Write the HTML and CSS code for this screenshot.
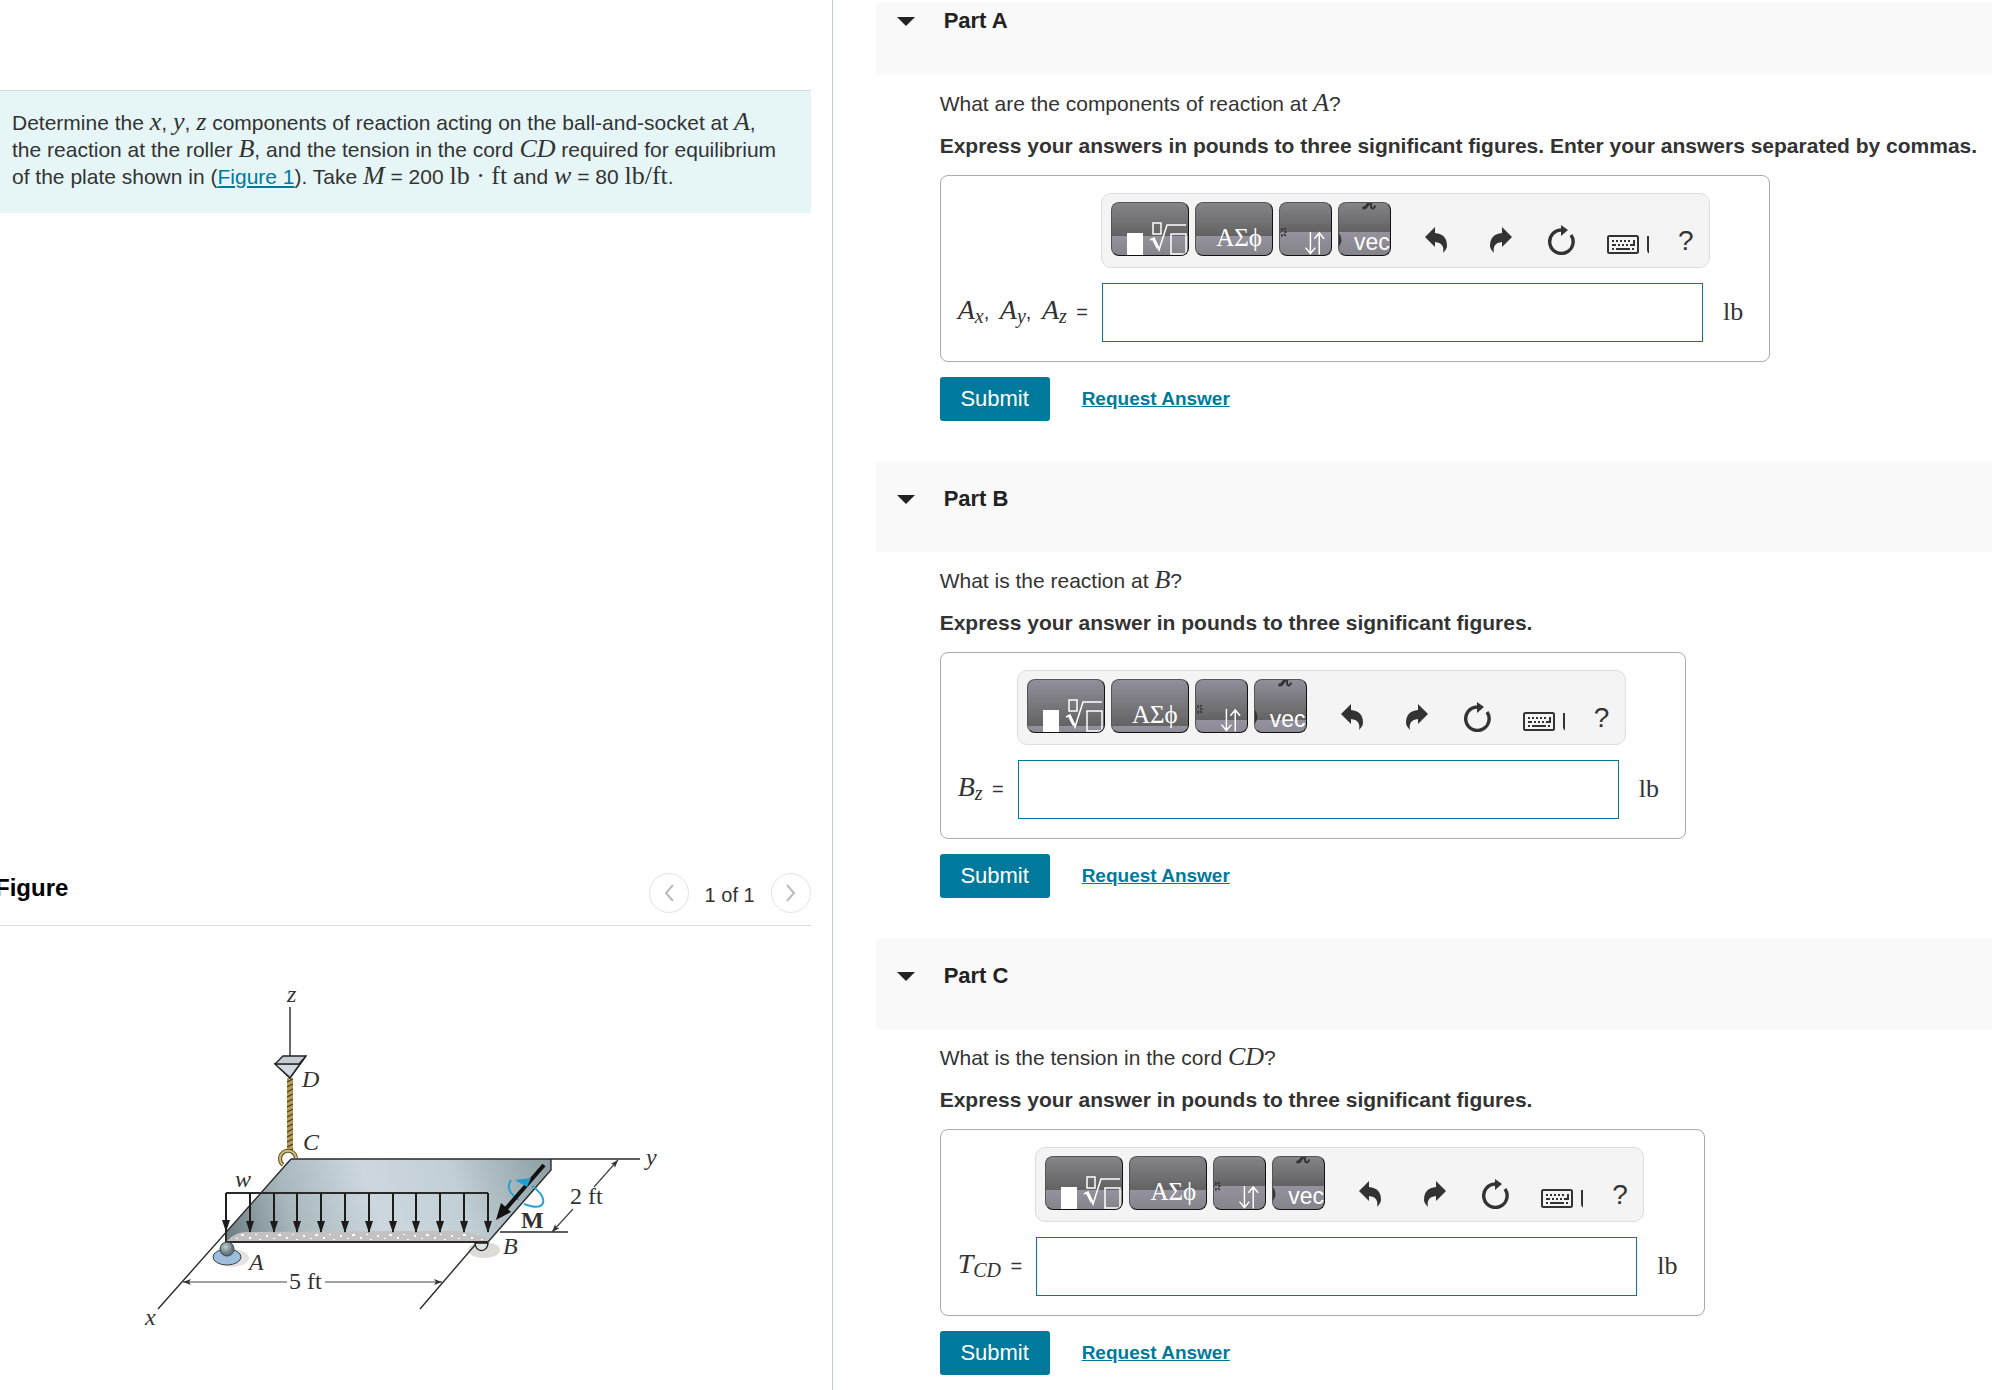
FILE: index.html
```html
<!doctype html>
<html lang="en">
<head>
	<meta charset="UTF-8">
	<title>Equilibrium of a plate</title>
	<link rel="stylesheet" href="styles.css">
</head>
<body>
	<svg class="sprite" aria-hidden="true">
		<symbol id="i-template" viewBox="0 0 76 52">
			<path d="M15 30h16v22H15z" fill="#fff"/>
			<path d="M41 20h8v11h-8zM59 31h15v20H59z" fill="none" stroke="#fff" stroke-width="1.5"/>
			<path d="M38 37l4-2 5 12 8-25h19" fill="none" stroke="#fff" stroke-width="1.5"/>
			<path d="M41 35l5 10" stroke="#fff" stroke-width="3"/>
		</symbol>
		<symbol id="i-arrows" viewBox="0 0 52 52">
			<path d="M31 29v22M26 45l5 6 5-6M40 52V30M35 36l5-6 5 6" fill="none" stroke="#fff" stroke-width="1.5"/>
			<path d="M0 29h1M4 29h3M2 25v3M2 31v3M4 27l2-2M4 31l2 2" stroke="#333" stroke-width="1.5"/>
		</symbol>
		<symbol id="i-vec" viewBox="0 0 52 52">
			<path d="M24 5l3-1 4-5" fill="none" stroke="#333" stroke-width="3"/>
			<path d="M33 -1q-1 6 1 6t3-3" fill="none" stroke="#333" stroke-width="2"/>
			<path d="M0 30q5 7 0 14z" fill="#333"/>
		</symbol>
		<symbol id="i-undo" viewBox="0 0 22 26">
			<path d="M0 10L10 0v6q12 1 12 13 0 3-4 7 2-10-8-11v5z" fill="#333"/>
		</symbol>
		<symbol id="i-redo" viewBox="0 0 22 26">
			<path d="M22 10L12 0v6Q0 7 0 19q0 3 4 7-2-10 8-11v5z" fill="#333"/>
		</symbol>
		<symbol id="i-reset" viewBox="0 0 27 30">
			<path d="M23 10a11.700 11.700 0 1 1-10-5" fill="none" stroke="#333" stroke-width="3.400"/>
			<path d="M13 0l7 5-7 6z" fill="#333"/>
		</symbol>
		<symbol id="i-keyboard" viewBox="0 0 42 20">
			<rect x="1" y="1" width="30" height="17" rx="1.5" fill="none" stroke="#333" stroke-width="2"/>
			<path d="M5 6h18" fill="none" stroke="#333" stroke-width="2" stroke-dasharray="2 2"/>
			<path d="M5 10h4M11 10h2M15 10h2M19 10h2M23 10h4V5M5 14h2M9 14h14M25 14h2" fill="none" stroke="#333" stroke-width="2"/>
			<path d="M41 1v14l1 3" fill="none" stroke="#333" stroke-width="2"/>
		</symbol>
	</svg>

	<div class="page">
		<section class="side">
			<div class="problem">
				Determine the <i>x</i>, <i>y</i>, <i>z</i> components of reaction acting on the ball-and-socket at <i>A</i>, the reaction at the roller <i>B</i>, and the tension in the cord <i>CD</i> required for equilibrium of the plate shown in (<a href="#figure">Figure 1</a>). Take <i>M</i> = 200 <span class="rm">lb · ft</span> and <i>w</i> = 80 <span class="rm">lb/ft</span>.
			</div>
			<div class="figure" id="figure">
				<div class="figure-head">
					<h2>Figure</h2>
					<div class="pager">
						<button type="button" aria-label="Previous figure"><svg viewBox="0 0 10 18"><path d="M9 1L2 9l7 8"/></svg></button>
						<span>1 of 1</span>
						<button type="button" aria-label="Next figure"><svg viewBox="0 0 10 18"><path d="M1 1l7 8-7 8"/></svg></button>
					</div>
				</div>
				<svg class="diagram" viewBox="130 970 560 370" role="img" aria-label="Plate ABC with distributed load w and moment M">
					<defs>
						<linearGradient id="plate" gradientUnits="userSpaceOnUse" x1="230" y1="1240" x2="545" y2="1140">
							<stop offset="0" stop-color="#6f8083"/>
							<stop offset=".2" stop-color="#a9b8bd"/>
							<stop offset=".45" stop-color="#ccd8de"/>
							<stop offset=".7" stop-color="#c2cfd5"/>
							<stop offset="1" stop-color="#8c9ea3"/>
						</linearGradient>
						<radialGradient id="ball" cx=".4" cy=".35">
							<stop offset="0" stop-color="#c5d1d2"/>
							<stop offset="1" stop-color="#66767a"/>
						</radialGradient>
						<pattern id="rope" x="286" y="1078" width="8" height="5" patternUnits="userSpaceOnUse">
							<path d="M0 0h8v5H0z" fill="#b59c58"/>
							<path d="M1 4l6-3" stroke="#4a3d1c" stroke-width="1.3"/>
						</pattern>
						<pattern id="specks" x="226" y="1231" width="37" height="11" patternUnits="userSpaceOnUse">
							<path d="M0 0h37v11H0z" fill="#c3c1c1"/>
							<path d="M3 4h2v2H3zM10 7h2v1h-2zM15 3h3v2h-3zM23 6h2v2h-2zM29 3h2v1h-2zM33 8h2v1h-2z" fill="#fff"/>
						</pattern>
						<marker id="load" viewBox="0 0 8 12" refX="4" refY="11" markerWidth="8" markerHeight="12" markerUnits="userSpaceOnUse">
							<path d="M0 0h8L4 12z" fill="#1c1c1c"/>
						</marker>
						<marker id="dim" viewBox="0 0 8 6" refX="8" refY="3" markerWidth="8" markerHeight="6" markerUnits="userSpaceOnUse" orient="auto-start-reverse">
							<path d="M0 0l8 3-8 3 2-3z" fill="#333"/>
						</marker>
					</defs>
					<ellipse cx="232" cy="1258" rx="17" ry="9" fill="#e6e2e1"/>
					<ellipse cx="484" cy="1250" rx="16" ry="8" fill="#dedbd9"/>
					<path d="M291 1159h260v11l-63 72H226v-10z" fill="url(#plate)"/>
					<path d="M227 1241q8-9 20-9l160-1 55 0 22 5 3 5z" fill="url(#specks)"/>
					<g fill="none" stroke="#2a2a2a" stroke-width="1.4">
						<path d="M290 1007v50M291 1159h349M291 1159L158 1309M551 1159v11l-63 72M475 1245l-55 64M500 1232h68"/>
						<path d="M226 1230v12h262" stroke-width="2"/>
						<path d="M226 1193h262" stroke-width="2"/>
					</g>
					<g stroke="#1c1c1c" stroke-width="2">
						<path d="M226 1193v38" marker-end="url(#load)"/><path d="M250 1193v39" marker-end="url(#load)"/>
						<path d="M274 1193v39" marker-end="url(#load)"/><path d="M297 1193v39" marker-end="url(#load)"/>
						<path d="M321 1193v39" marker-end="url(#load)"/><path d="M345 1193v39" marker-end="url(#load)"/>
						<path d="M369 1193v39" marker-end="url(#load)"/><path d="M393 1193v39" marker-end="url(#load)"/>
						<path d="M416 1193v39" marker-end="url(#load)"/><path d="M440 1193v39" marker-end="url(#load)"/>
						<path d="M464 1193v39" marker-end="url(#load)"/><path d="M488 1193v39" marker-end="url(#load)"/>
					</g>
					<g fill="none" stroke="#444" stroke-width="1.2">
						<path d="M287 1282H183" marker-end="url(#dim)"/>
						<path d="M325 1282h117" marker-end="url(#dim)"/>
						<path d="M594 1187l24-27" marker-end="url(#dim)"/>
						<path d="M573 1209l-21 23" marker-end="url(#dim)"/>
					</g>
					<!-- cord CD and its anchors -->
					<path d="M287 1078h6v74h-6z" fill="url(#rope)"/>
					<path d="M283 1165a8 8 0 1 1 13-7" fill="none" stroke="#5e4f20" stroke-width="4"/>
					<path d="M283 1165a8 8 0 1 1 13-7" fill="none" stroke="#d2bd78" stroke-width="2"/>
					<path d="M283 1056h23l-16 22-15-14z" fill="#c4cbd3" stroke="#222" stroke-width="1.3"/>
					<path d="M275 1064h24l7-8-16 22z" fill="#8f979f" stroke="#222" stroke-width="1.3"/>
					<path d="M277 1065h21l-8 11z" fill="#d3dae2"/>
					<!-- supports -->
					<ellipse cx="227" cy="1257" rx="14" ry="8" fill="#9cbddb" stroke="#37474f"/>
					<circle cx="227" cy="1249" r="7" fill="url(#ball)" stroke="#37474f"/>
					<path d="M475 1243a6 7 0 0 0 13 0z" fill="#dfe6e8" stroke="#222" stroke-width="1.4"/>
					<!-- moment M -->
					<path d="M511 1180q-7 10 8 20M524 1204q16 6 19-1 2-8-11-17" fill="none" stroke="#27a3d4" stroke-width="2"/>
					<path d="M544 1165l-40 46" stroke="#111" stroke-width="4"/>
					<path d="M496 1220l5-17 10 9z" fill="#111"/>
					<path d="M515 1180l16-2-4 9z" fill="#1f9bcd"/>
					<g class="tags">
						<text x="287" y="1002">z</text>
						<text x="302" y="1087">D</text>
						<text x="303" y="1150">C</text>
						<text x="235" y="1187">w</text>
						<text x="249" y="1270">A</text>
						<text x="503" y="1254">B</text>
						<text x="145" y="1325">x</text>
						<text x="646" y="1165">y</text>
						<text x="521" y="1228" class="bold">M</text>
						<text x="289" y="1289" class="up">5 ft</text>
						<text x="570" y="1204" class="up">2 ft</text>
					</g>
				</svg>
			</div>
		</section>

		<main class="parts">
			<section class="part part-a">
				<header><h3><button type="button" class="toggle">Part A</button></h3></header>
				<form class="part-body">
					<p>What are the components of reaction at <i>A</i>?</p>
					<p><b>Express your answers in pounds to three significant figures. Enter your answers separated by commas.</b></p>
					<div class="answer">
						<div class="toolbar">
							<button type="button" class="key wide" aria-label="Templates"><svg><use href="#i-template"/></svg></button>
							<button type="button" class="key wide greek">ΑΣϕ</button>
							<button type="button" class="key" aria-label="Subscripts"><svg><use href="#i-arrows"/></svg></button>
							<button type="button" class="key vec"><svg><use href="#i-vec"/></svg>vec</button>
							<button type="button" class="tool undo" aria-label="Undo"><svg><use href="#i-undo"/></svg></button>
							<button type="button" class="tool redo" aria-label="Redo"><svg><use href="#i-redo"/></svg></button>
							<button type="button" class="tool reset" aria-label="Reset"><svg><use href="#i-reset"/></svg></button>
							<button type="button" class="tool keyboard" aria-label="Keyboard shortcuts"><svg><use href="#i-keyboard"/></svg></button>
							<button type="button" class="tool help">?</button>
						</div>
						<label for="ans-a"><i>A<sub>x</sub></i>, <i>A<sub>y</sub></i>, <i>A<sub>z</sub></i> =</label>
						<input type="text" id="ans-a">
						<span class="unit">lb</span>
					</div>
					<div class="actions"><button type="submit">Submit</button><a href="#">Request Answer</a></div>
				</form>
			</section>

			<section class="part part-b">
				<header><h3><button type="button" class="toggle">Part B</button></h3></header>
				<form class="part-body">
					<p>What is the reaction at <i>B</i>?</p>
					<p><b>Express your answer in pounds to three significant figures.</b></p>
					<div class="answer">
						<div class="toolbar">
							<button type="button" class="key wide" aria-label="Templates"><svg><use href="#i-template"/></svg></button>
							<button type="button" class="key wide greek">ΑΣϕ</button>
							<button type="button" class="key" aria-label="Subscripts"><svg><use href="#i-arrows"/></svg></button>
							<button type="button" class="key vec"><svg><use href="#i-vec"/></svg>vec</button>
							<button type="button" class="tool undo" aria-label="Undo"><svg><use href="#i-undo"/></svg></button>
							<button type="button" class="tool redo" aria-label="Redo"><svg><use href="#i-redo"/></svg></button>
							<button type="button" class="tool reset" aria-label="Reset"><svg><use href="#i-reset"/></svg></button>
							<button type="button" class="tool keyboard" aria-label="Keyboard shortcuts"><svg><use href="#i-keyboard"/></svg></button>
							<button type="button" class="tool help">?</button>
						</div>
						<label for="ans-b"><i>B<sub>z</sub></i> =</label>
						<input type="text" id="ans-b">
						<span class="unit">lb</span>
					</div>
					<div class="actions"><button type="submit">Submit</button><a href="#">Request Answer</a></div>
				</form>
			</section>

			<section class="part part-c">
				<header><h3><button type="button" class="toggle">Part C</button></h3></header>
				<form class="part-body">
					<p>What is the tension in the cord <i>CD</i>?</p>
					<p><b>Express your answer in pounds to three significant figures.</b></p>
					<div class="answer">
						<div class="toolbar">
							<button type="button" class="key wide" aria-label="Templates"><svg><use href="#i-template"/></svg></button>
							<button type="button" class="key wide greek">ΑΣϕ</button>
							<button type="button" class="key" aria-label="Subscripts"><svg><use href="#i-arrows"/></svg></button>
							<button type="button" class="key vec"><svg><use href="#i-vec"/></svg>vec</button>
							<button type="button" class="tool undo" aria-label="Undo"><svg><use href="#i-undo"/></svg></button>
							<button type="button" class="tool redo" aria-label="Redo"><svg><use href="#i-redo"/></svg></button>
							<button type="button" class="tool reset" aria-label="Reset"><svg><use href="#i-reset"/></svg></button>
							<button type="button" class="tool keyboard" aria-label="Keyboard shortcuts"><svg><use href="#i-keyboard"/></svg></button>
							<button type="button" class="tool help">?</button>
						</div>
						<label for="ans-c"><i>T<sub>CD</sub></i> =</label>
						<input type="text" id="ans-c">
						<span class="unit">lb</span>
					</div>
					<div class="actions"><button type="submit">Submit</button><a href="#">Request Answer</a></div>
				</form>
			</section>
		</main>
	</div>
</body>
</html>
```
FILE: styles.css
```css
*{
	box-sizing: border-box;
	margin: 0;
	padding: 0;
}
body{
	font: 21px/26px "Liberation Sans", Arial, sans-serif;
	color: #333;
	background: #fff;
}
button{
	font: inherit;
	color: inherit;
	border: 0;
	background: none;
	cursor: pointer;
}
a{
	color: #007a9c;
}
i, .rm, .unit{
	font-family: "Liberation Serif", "Times New Roman", serif;
	font-size: 26px;
	line-height: 20px;
}
sub{
	font-size: 20px;
	line-height: 0;
	vertical-align: -4px;
}
.sprite{
	display: none;
}
.page{
	display: flex;
	min-height: 100vh;
}

/* left column */
.side{
	display: flex;
	flex-direction: column;
	justify-content: space-between;
	width: 41.8%;
	padding: 90px 21px 0 0;
	border-right: 1px solid #bccad6;
	overflow: hidden;
}
.problem{
	padding: 18px 24px 23px 12px;
	line-height: 27px;
	border-top: 1px solid #d9dcdd;
	background: #e6f6f7;
}
.figure{
	margin-bottom: 26px;
}
.figure-head{
	display: flex;
	justify-content: space-between;
	height: 64px;
	border-bottom: 1px solid #ddd;
}
.figure-head h2{
	margin-left: -5px;
	padding-top: 13px;
	font-size: 24px;
	color: #000;
}
.pager{
	display: flex;
	gap: 16px;
	height: 40px;
	margin-top: 11px;
	font-size: 20px;
	line-height: 44px;
}
.pager button{
	width: 40px;
	height: 40px;
	border: 1px solid #e3e3e3;
	border-radius: 50%;
}
.pager svg{
	display: block;
	width: 10px;
	height: 18px;
	margin: auto;
	fill: none;
	stroke: #bbb;
	stroke-width: 2;
}
.diagram{
	display: block;
	width: 560px;
	max-width: 100%;
	margin: 44px 0 50px 130px;
}
.tags{
	font: italic 24px "Liberation Serif", "Times New Roman", serif;
	fill: #333;
}
.tags .up{
	font-style: normal;
}
.tags .bold{
	font-style: normal;
	font-weight: bold;
}

/* right column */
.parts{
	flex: 1;
	min-width: 0;
	padding: 3px 0 0 43px;
}
.part header{
	height: 90px;
	padding-top: 24px;
	background: #f9f9f9;
}
.part-a header{
	height: 72px;
	padding-top: 5px;
}
.part h3{
	font-size: 22px;
}
.toggle{
	display: flex;
	align-items: center;
	gap: 29px;
	padding-left: 21px;
	color: #222;
}
.toggle::before{
	content: "";
	border: 9px solid transparent;
	border-top: 9px solid #222;
	border-bottom: 0;
}
.part-body{
	padding: 16px 0 41px 64px;
}
.part-body p{
	margin-bottom: 16px;
	white-space: nowrap;
}
.answer{
	display: grid;
	grid-template-columns: auto 609px auto;
	column-gap: 13px;
	row-gap: 15px;
	align-items: center;
	width: max-content;
	padding: 17px 26px 19px 17px;
	border: 1px solid #aaa;
	border-radius: 8px;
}
.toolbar{
	grid-column: 2;
	display: flex;
	align-items: flex-start;
	height: 75px;
	padding: 8px 9px;
	border: 1px solid #ddd;
	border-radius: 10px;
	background: #f4f4f4;
}
.answer label{
	grid-column: 1;
	padding-bottom: 2px;
	font-size: 20px;
	white-space: nowrap;
}
.answer label i{
	font-size: 28px;
}
.answer label i + i{
	margin-left: 5px;
}
.answer label i:last-of-type{
	margin-right: 4px;
}
.answer input{
	width: 601px;
	height: 59px;
	margin-left: 1px;
	padding: 0 12px;
	font: inherit;
	border: 1px solid #007a9c;
}
.unit{
	padding-bottom: 2px;
}
.key{
	flex: none;
	position: relative;
	width: 53px;
	height: 54px;
	margin-right: 6px;
	overflow: hidden;
	color: #fff;
	border: 1px solid #111;
	border-top-color: #555;
	border-left-color: #555;
	border-radius: 8px;
	background: linear-gradient(#858489, #626262 55%, #95929e 55%, #85848a);
}
.wide{
	width: 78px;
	background: linear-gradient(#858489, #626262 63%, #95929e 63%, #85848a);
}
.part-b .key{
	background: linear-gradient(#918f9a, #626262 77%, #95929e 77%, #8c8a94);
}
.part-b .wide{
	background: linear-gradient(#918f9a, #626262 89%, #95929e 89%, #8c8a94);
}
.key svg{
	display: block;
	width: 100%;
	height: 100%;
}
.greek{
	padding: 17px 0 0 10px;
	font: 25px/26px "Liberation Serif", "Times New Roman", serif;
}
.vec{
	padding: 25px 0 0 15px;
	font-size: 23px;
	text-align: left;
}
.vec svg{
	position: absolute;
	inset: 0;
}
.tool{
	flex: none;
}
.tool svg{
	display: block;
	width: 22px;
	height: 26px;
}
.undo{
	margin: 25px 43px 0 28px;
}
.redo{
	margin: 25px 36px 0 0;
}
.reset{
	margin: 23px 32px 0 0;
}
.reset svg{
	width: 27px;
	height: 30px;
}
.keyboard{
	margin: 33px 29px 0 0;
}
.keyboard svg{
	width: 42px;
	height: 20px;
}
.help{
	padding-top: 26px;
	font-size: 28px;
}
.actions{
	display: flex;
	align-items: center;
	gap: 32px;
	margin-top: 15px;
}
.actions button{
	width: 110px;
	height: 44px;
	font-size: 22px;
	color: #fff;
	border-radius: 3px;
	background: #007a9c;
}
.actions a{
	font-weight: bold;
	font-size: 19px;
}
```
